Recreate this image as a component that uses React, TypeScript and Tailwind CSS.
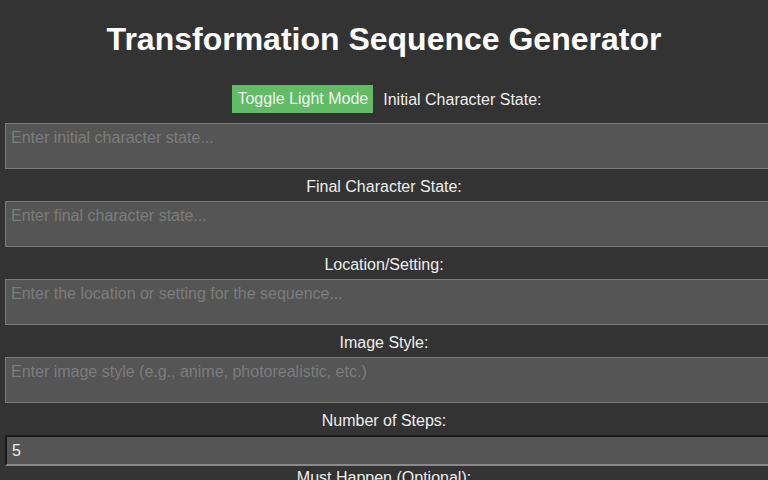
import React from "react";

const Label = ({ children, className = "" }: { children: React.ReactNode; className?: string }) => (
  <div className={`h-[19px] leading-[19px] text-[16px] text-[#eeeeee] text-center ${className}`}>{children}</div>
);

const Area = ({ placeholder }: { placeholder: string }) => (
  <textarea
    placeholder={placeholder}
    className="block w-full ml-[5px] mt-[5px] h-[46px] resize-none border border-[#7a7a7a] bg-[#555555] px-[5px] py-[5px] text-[16px] leading-[18px] text-[#eeeeee] placeholder:text-[#7c7c7c] outline-none"
    style={{ fontFamily: '"Liberation Sans", Arial, sans-serif' }}
  />
);

export default function App() {
  return (
    <div
      className="w-[768px] h-[480px] overflow-hidden bg-[#333333] text-white"
      style={{ fontFamily: '"Liberation Sans", Arial, sans-serif' }}
    >
      <h1 className="mt-[21px] mb-[21px] h-[37px] leading-[37px] text-center text-[32px] font-bold text-white">
        Transformation Sequence Generator
      </h1>
      <div className="flex items-center justify-center gap-[10px] pl-[6px] pt-[6px]">
        <button className="h-[28px] px-[5px] bg-[#62bb65] text-[16px] leading-[18px] text-[#f2f2f2]">
          Toggle Light Mode
        </button>
        <span className="text-[16px] leading-[19px] text-[#eeeeee]">Initial Character State:</span>
      </div>
      <div className="h-[5px]" />
      <Area placeholder="Enter initial character state..." />
      <Label className="mt-[8px]">Final Character State:</Label>
      <Area placeholder="Enter final character state..." />
      <Label className="mt-[8px]">Location/Setting:</Label>
      <Area placeholder="Enter the location or setting for the sequence..." />
      <Label className="mt-[8px]">Image Style:</Label>
      <Area placeholder="Enter image style (e.g., anime, photorealistic, etc.)" />
      <Label className="mt-[8px]">Number of Steps:</Label>
      <input
        type="text"
        defaultValue="5"
        className="block w-full ml-[5px] mt-[5px] h-[31px] border-2 border-t-[#1c1c1c] border-l-[#1c1c1c] border-b-[#8a8a8a] border-r-[#8a8a8a] bg-[#555555] px-[5px] text-[16px] text-[#eeeeee] outline-none"
        style={{ fontFamily: '"Liberation Sans", Arial, sans-serif' }}
      />
      <Label className="mt-[2px]">Must Happen (Optional):</Label>
    </div>
  );
}
